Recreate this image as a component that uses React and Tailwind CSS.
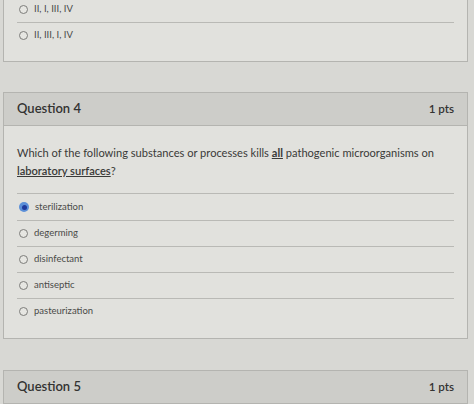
import React from "react";

const font = { fontFamily: "Lato, 'Open Sans', sans-serif" };

function Radio({ checked }) {
  if (checked) {
    return (
      <span className="grid size-[10px] place-items-center rounded-full bg-[#5b8fd8]">
        <span className="size-[5px] rounded-full bg-[#1f3a9c]" />
      </span>
    );
  }
  return <span className="size-[9px] rounded-full border border-[#7d7d7a] bg-[#e6e6e2]" />;
}

function Option({ label, checked, first }) {
  return (
    <div
      className={
        "mx-[13px] flex h-[26px] items-center gap-[6px] pl-[2px] " +
        (first ? "" : "border-t border-[#b9b9b5]")
      }
    >
      <Radio checked={checked} />
      <span className="text-[9.5px] text-[#4a4a48]">{label}</span>
    </div>
  );
}

function Header({ title }) {
  return (
    <div className="flex h-[33px] items-center justify-between border-b border-[#b4b4b0] bg-[#cdcdc9] px-[13px]">
      <span className="text-[13px] font-semibold text-[#333332]">{title}</span>
      <span className="text-[11.6px] font-semibold text-[#333332]">1 pts</span>
    </div>
  );
}

export default function App() {
  return (
    <div
      className="flex h-[404px] w-[474px] flex-col overflow-hidden bg-[#d8d8d4] pl-[3px]"
      style={font}
    >
      <div className="mt-[-4px] w-[465px] border border-t-0 border-[#b4b4b0] bg-[#e1e1dd] pb-[13px]">
        <Option label="II, I, III, IV" first />
        <Option label="II, III, I, IV" />
      </div>

      <div className="mt-[30px] w-[465px] border border-[#b4b4b0] bg-[#e1e1dd]">
        <Header title="Question 4" />
        <div className="px-[13px] pb-[13px] pt-[18px] text-[11.1px] leading-[18px] text-[#3a3a38]">
          Which of the following substances or processes kills{" "}
          <span className="font-bold underline">all</span> pathogenic microorganisms on{" "}
          <span className="font-semibold underline">laboratory surfaces</span>?
        </div>
        <div className="pb-[14px]">
          <div className="mx-[13px] border-t border-[#b9b9b5]" />
          <Option label="sterilization" checked first />
          <Option label="degerming" />
          <Option label="disinfectant" />
          <Option label="antiseptic" />
          <Option label="pasteurization" />
        </div>
      </div>

      <div className="mt-[31px] w-[465px] border border-b-0 border-[#b4b4b0] bg-[#e1e1dd]">
        <Header title="Question 5" />
      </div>
    </div>
  );
}
